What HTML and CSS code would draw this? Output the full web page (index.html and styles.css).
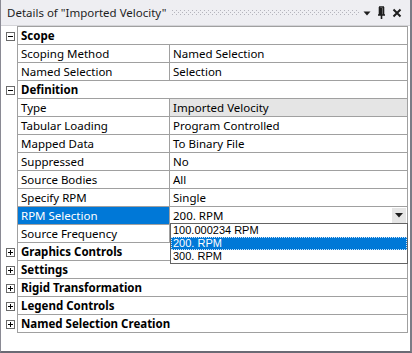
FILE: index.html
```html
<!DOCTYPE html>
<html>
<head>
<meta charset="utf-8">
<link rel="stylesheet" href="styles.css">
</head>
<body>
<div class="panel">
  <div class="titlebar">
    <span class="title">Details of "Imported Velocity"</span>
    <span class="grip"></span>
    <span class="tb-icons">
      <svg class="ic" width="8" height="16" viewBox="0 0 8 16"><path d="M0.5 6.5 H7.5 L4 10.5 Z" fill="#1e1e1e"/></svg>
      <svg class="ic pin" width="9" height="16" viewBox="0 0 9 16"><path d="M2 2 H7 M2.5 2 V10 M6.5 2 V10 M1 10 H8 M4.5 10 V14" stroke="#1e1e1e" stroke-width="1.6" fill="none"/><path d="M3 3 H5.5 V10 H3 Z" fill="#1e1e1e"/></svg>
      <svg class="ic" width="10" height="16" viewBox="0 0 10 16"><path d="M1.5 4.5 L8.5 11.5 M8.5 4.5 L1.5 11.5" stroke="#1e1e1e" stroke-width="2" fill="none"/></svg>
    </span>
  </div>
  <div class="body">
    <div class="tree">
      <div class="row group"><span class="exp"><span class="box minus"></span></span><div class="cells"><div class="head">Scope</div></div></div>
      <div class="row"><span class="exp"></span><div class="cells"><div class="name">Scoping Method</div><div class="val">Named Selection</div></div></div>
      <div class="row"><span class="exp"></span><div class="cells"><div class="name">Named Selection</div><div class="val">Selection</div></div></div>
      <div class="row group"><span class="exp"><span class="box minus"></span></span><div class="cells"><div class="head">Definition</div></div></div>
      <div class="row"><span class="exp"></span><div class="cells"><div class="name">Type</div><div class="val ro">Imported Velocity</div></div></div>
      <div class="row"><span class="exp"></span><div class="cells"><div class="name">Tabular Loading</div><div class="val">Program Controlled</div></div></div>
      <div class="row"><span class="exp"></span><div class="cells"><div class="name">Mapped Data</div><div class="val">To Binary File</div></div></div>
      <div class="row"><span class="exp"></span><div class="cells"><div class="name">Suppressed</div><div class="val">No</div></div></div>
      <div class="row"><span class="exp"></span><div class="cells"><div class="name">Source Bodies</div><div class="val">All</div></div></div>
      <div class="row"><span class="exp"></span><div class="cells"><div class="name">Specify RPM</div><div class="val">Single</div></div></div>
      <div class="row"><span class="exp"></span><div class="cells"><div class="name sel">RPM Selection</div><div class="val combo"><span class="combo-text">200. RPM</span><span class="combo-btn"><svg width="8" height="5" viewBox="0 0 8 5"><path d="M0 0 H8 L4 4.5 Z" fill="#1e1e1e"/></svg></span></div></div></div>
      <div class="row"><span class="exp"></span><div class="cells"><div class="name">Source Frequency</div><div class="val"></div></div></div>
      <div class="row group"><span class="exp"><span class="box plus"></span></span><div class="cells"><div class="head">Graphics Controls</div></div></div>
      <div class="row group"><span class="exp"><span class="box plus"></span></span><div class="cells"><div class="head">Settings</div></div></div>
      <div class="row group"><span class="exp"><span class="box plus"></span></span><div class="cells"><div class="head">Rigid Transformation</div></div></div>
      <div class="row group"><span class="exp"><span class="box plus"></span></span><div class="cells"><div class="head">Legend Controls</div></div></div>
      <div class="row group"><span class="exp"><span class="box plus"></span></span><div class="cells"><div class="head">Named Selection Creation</div></div></div>
    </div>
    <div class="popup">
      <div class="item">100.000234 RPM</div>
      <div class="item hl">200. RPM</div>
      <div class="item">300. RPM</div>
    </div>
  </div>
</div>
</body>
</html>
```
FILE: styles.css
```css
* { box-sizing: border-box; }
html, body { margin: 0; padding: 0; background: #fff; }
body { font-family: "Noto Sans", "Open Sans", sans-serif; font-size: 11.5px; color: #000; }

.panel {
  width: 412px;
  height: 353px;
  border-left: 1px solid #8a8a94;
  border-right: 2px solid #7c7c86;
  border-bottom: 2px solid #6a6a74;
  background: #fff;
  position: relative;
  overflow: hidden;
}

.titlebar {
  height: 25px;
  background: #eeeef2;
  display: flex;
  align-items: center;
  padding-left: 6px;
  color: #1e1e1e;
}
.title { white-space: nowrap; font-size: 11.5px; }
.grip {
  flex: 1;
  height: 5px;
  margin: 0 4px 0 6px;
  background-image:
    radial-gradient(circle at 0.5px 0.5px, #b4b4bc 0.7px, transparent 0.8px),
    radial-gradient(circle at 2.5px 2.5px, #b4b4bc 0.7px, transparent 0.8px);
  background-size: 4px 4px;
}
.tb-icons { display: flex; align-items: center; gap: 6px; padding-right: 8px; }
.ic { display: block; }

.body {
  border-top: 1px solid #d4d4d8;
  position: relative;
  height: 325px;
}

.tree {
  margin-left: 16px;
  margin-right: 2px;
  border-top: 1px solid #a0a0a0;
}
.row { display: flex; height: 18px; margin-left: -16px; }
.exp {
  width: 16px;
  flex: none;
  display: flex;
  align-items: center;
  padding-left: 5px;
}
.box {
  width: 9px;
  height: 9px;
  border: 1px solid #6a6a6a;
  position: relative;
  background: #fff;
}
.box::before {
  content: "";
  position: absolute;
  left: 1px; top: 3px;
  width: 5px; height: 1px;
  background: #000;
}
.box.plus::after {
  content: "";
  position: absolute;
  left: 3px; top: 1px;
  width: 1px; height: 5px;
  background: #000;
}
.cells {
  flex: 1;
  display: flex;
  border-left: 1px solid #a0a0a0;
  border-right: 1px solid #a0a0a0;
  border-bottom: 1px solid #a0a0a0;
}
.head {
  flex: 1;
  font-weight: bold;
  padding-left: 3px;
  line-height: 17px;
  white-space: nowrap;
}
.name {
  width: 152px;
  flex: none;
  border-right: 1px solid #a0a0a0;
  padding-left: 3px;
  line-height: 17px;
  white-space: nowrap;
}
.name.sel { background: #0078d7; color: #fff; }
.val {
  flex: 1;
  padding-left: 3px;
  line-height: 17px;
  white-space: nowrap;
}
.val.ro { background: #e5e5e5; }
.combo { display: flex; align-items: center; padding-right: 1px; }
.combo-text { flex: 1; line-height: 14px; }
.combo-btn {
  width: 14px;
  height: 15px;
  background: #e6e6e6;
  display: flex;
  align-items: center;
  justify-content: center;
}

.popup {
  position: absolute;
  left: 169px;
  top: 197px;
  width: 238px;
  height: 41px;
  border: 1px solid #646464;
  background: #fff;
}
.item {
  height: 13px;
  line-height: 13px;
  font-family: "Liberation Sans", Arial, sans-serif;
  font-size: 11px;
  padding-left: 2px;
  white-space: nowrap;
}
.item.hl {
  background: #0078d7;
  color: #fff;
  outline: 1px dotted #d0e4f8;
  outline-offset: -1px;
}
```
